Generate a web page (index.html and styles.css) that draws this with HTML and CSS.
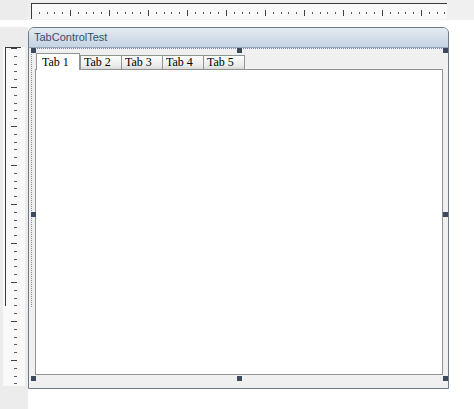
FILE: index.html
```html
<!DOCTYPE html>
<html lang="en">
<head>
  <meta charset="UTF-8" />
  <title>TabControlTest</title>
  <link rel="stylesheet" href="styles.css">
</head>
<body>

  <div class="designer">
    <div class="corner"></div>
    <div class="htrack"><div class="hruler"></div></div>
    <div class="vtrack"><div class="vruler"></div></div>

    <div class="form">
      <div class="titlebar">TabControlTest</div>
      <div class="client">
        <div class="tabcontrol">
          <div class="tabs">
            <div class="tab active">Tab 1</div>
            <div class="tab">Tab 2</div>
            <div class="tab">Tab 3</div>
            <div class="tab">Tab 4</div>
            <div class="tab">Tab 5</div>
          </div>
          <div class="tabpage"></div>
        </div>
      </div>

      <div class="selection"></div>
      <span class="handle h-left v-top"></span>
      <span class="handle h-mid v-top"></span>
      <span class="handle h-right v-top"></span>
      <span class="handle h-left v-mid"></span>
      <span class="handle h-right v-mid"></span>
      <span class="handle h-left v-bottom"></span>
      <span class="handle h-mid v-bottom"></span>
      <span class="handle h-right v-bottom"></span>
    </div>
  </div>

</body>
</html>
```

FILE: styles.css
```css
    body {
      margin: 0;
      background: #fff;
      font-family: "Liberation Sans", Arial, sans-serif;
    }
    .designer {
      display: grid;
      grid-template-columns: 28px 1fr;
      grid-template-rows: 27px 1fr;
      width: 474px;
      height: 409px;
    }

    /* rulers */
    .corner {
      background: linear-gradient(#ececec 0 20px, #fff 20px);
    }
    .htrack {
      background: linear-gradient(#f0f0f0 0 20px, #fff 20px);
      padding-top: 3px;
    }
    .hruler {
      margin-left: 3px;
      width: 415px;
      height: 15px;
      border-top: 1px solid #3a3a3a;
      border-left: 1px solid #3a3a3a;
      background:
        repeating-linear-gradient(90deg, #404040 0 1px, transparent 1px 39px) -1px 6px / 100% 6px no-repeat,
        repeating-linear-gradient(90deg, #5a5a5a 0 1px, transparent 1px 7.8px) -1px 8px / 100% 2px no-repeat,
        #f9f9f9;
    }
    .vtrack {
      background: #ececec;
      padding-top: 20px;
    }
    .vruler {
      margin-left: 3px;
      width: 22px;
      height: 339px;
      background:
        linear-gradient(#3a3a3a, #3a3a3a) 2px 0 / 1px 259px no-repeat,
        linear-gradient(#3a3a3a, #3a3a3a) 2px 0 / 16px 1px no-repeat,
        repeating-linear-gradient(180deg, #404040 0 1px, transparent 1px 39px) 8px 1px / 6px 100% no-repeat,
        repeating-linear-gradient(180deg, #5a5a5a 0 1px, transparent 1px 7.8px) 11px 1px / 3px 100% no-repeat,
        #f9f9f9;
    }

    /* form window */
    .form {
      position: relative;
      align-self: start;
      box-sizing: border-box;
      width: 421px;
      height: 362px;
      display: flex;
      flex-direction: column;
      border: 1px solid #6f7b88;
      border-radius: 6px 6px 0 0;
      background: #f0f0f0;
    }
    .titlebar {
      height: 19px;
      line-height: 19px;
      padding-left: 5px;
      border-bottom: 1px solid #97a6b8;
      border-radius: 5px 5px 0 0;
      background: linear-gradient(#e3eaf2, #c5d3e3);
      color: #3c4e66;
      font-size: 11px;
    }
    .client {
      flex: 1;
      display: flex;
      padding: 5px 5px 13px 6px;
    }
    .tabcontrol {
      flex: 1;
      display: flex;
      flex-direction: column;
    }
    .tabs {
      display: flex;
      align-items: flex-end;
      height: 16px;
      padding-left: 1px;
      position: relative;
      z-index: 1;
    }
    .tab {
      box-sizing: border-box;
      width: 42px;
      height: 14px;
      margin-left: -1px;
      padding-left: 3px;
      border: 1px solid #8f9494;
      border-bottom: none;
      background: linear-gradient(#fdfdfd, #ebebeb 75%, #d9d9d9);
      color: #000;
      font: 12px/13px "Liberation Serif", "Times New Roman", serif;
      white-space: nowrap;
    }
    .tab.active {
      width: 44px;
      height: 17px;
      margin-left: 0;
      margin-bottom: -1px;
      padding-left: 5px;
      background: #fff;
      line-height: 16px;
    }
    .tab.active + .tab {
      margin-left: 0;
    }
    .tabpage {
      flex: 1;
      background: #fff;
      border: 1px solid #8f9494;
    }

    /* designer selection */
    .selection {
      position: absolute;
      left: 2px;
      top: 20px;
      width: 415px;
      height: 330px;
      pointer-events: none;
    }
    .selection::before {
      content: "";
      position: absolute;
      left: 0;
      top: 0;
      width: 100%;
      border-top: 1px dotted #7c84c4;
    }
    .selection::after {
      content: "";
      position: absolute;
      left: 0;
      top: 0;
      height: 259px;
      border-left: 1px dotted #7c84c4;
    }
    .handle {
      position: absolute;
      width: 5px;
      height: 5px;
      background: #3d4a5c;
    }
    .h-left { left: 2px; }
    .h-mid { left: 208px; }
    .h-right { left: 414px; }
    .v-top { top: 20px; }
    .v-mid { top: 184px; }
    .v-bottom { top: 348px; }
```
